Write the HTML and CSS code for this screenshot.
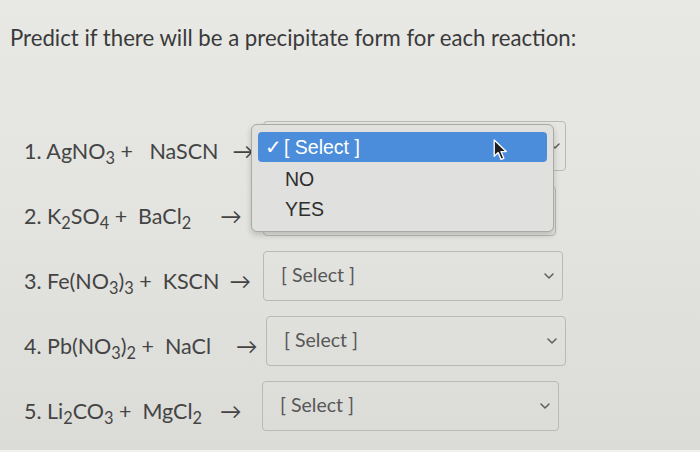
FILE: index.html
```html
<!DOCTYPE html>
<html>
<head>
<meta charset="utf-8">
<link rel="stylesheet" href="styles.css">
</head>
<body>
<div class="page">
  <h1 class="title">Predict if there will be a precipitate form for each reaction:</h1>
  <div class="rows">
    <div class="row">
      <div class="eq">1. AgNO<sub>3</sub> + &nbsp;&nbsp;NaSCN<span class="arr a1">→</span></div>
      <div class="sel covered s1"><span class="ph">[ Select ]</span><svg class="chev" viewBox="0 0 10 6"><polyline points="1,1 5,5 9,1"/></svg></div>
    </div>
    <div class="row">
      <div class="eq">2. K<sub>2</sub>SO<sub>4</sub> + &nbsp;BaCl<sub>2</sub><span class="arr a2">→</span></div>
      <div class="sel covered s2"><span class="ph">[ Select ]</span><svg class="chev" viewBox="0 0 10 6"><polyline points="1,1 5,5 9,1"/></svg></div>
    </div>
    <div class="row">
      <div class="eq">3. Fe(NO<sub>3</sub>)<sub>3</sub> + &nbsp;KSCN<span class="arr a3">→</span></div>
      <div class="sel"><span class="ph">[ Select ]</span><svg class="chev" viewBox="0 0 10 6"><polyline points="1,1 5,5 9,1"/></svg></div>
    </div>
    <div class="row">
      <div class="eq">4. Pb(NO<sub>3</sub>)<sub>2</sub> + &nbsp;NaCl<span class="arr a4">→</span></div>
      <div class="sel s4"><span class="ph">[ Select ]</span><svg class="chev" viewBox="0 0 10 6"><polyline points="1,1 5,5 9,1"/></svg></div>
    </div>
    <div class="row">
      <div class="eq">5. Li<sub>2</sub>CO<sub>3</sub> + &nbsp;MgCl<sub>2</sub><span class="arr a5">→</span></div>
      <div class="sel s5"><span class="ph">[ Select ]</span><svg class="chev" viewBox="0 0 10 6"><polyline points="1,1 5,5 9,1"/></svg></div>
    </div>
  </div>
  <div class="menu">
    <div class="opt active"><span class="check">✓</span>[ Select ]</div>
    <div class="opt">NO</div>
    <div class="opt">YES</div>
  </div>
  <svg class="cursor" viewBox="0 0 14 21"><path d="M1 1 L1 16.5 L4.8 13 L7.6 19.5 L10.2 18.4 L7.5 12 L12.5 12 Z"/></svg>
</div>
</body>
</html>
```
FILE: styles.css
```css
html, body {
  margin: 0;
  padding: 0;
}
body {
  width: 700px;
  height: 452px;
  overflow: hidden;
  font-family: Lato, "Open Sans", sans-serif;
}
.page {
  position: relative;
  height: 450px;
  border-bottom: 2px solid #f1f1ef;
  background: linear-gradient(180deg, #e8e8e5 0%, #e3e3e0 50%, #dbdbd8 100%);
  color: #414141;
}
.title {
  margin: 0;
  padding: 25px 0 0 10px;
  font-size: 22.2px;
  font-weight: 400;
  line-height: 26px;
  color: #3a3a3a;
}
.rows {
  display: flex;
  flex-direction: column;
  gap: 15px;
  margin-top: 70px;
}
.row {
  display: flex;
  align-items: center;
  height: 50px;
}
.eq {
  flex: 0 0 263px;
  box-sizing: border-box;
  padding: 10px 0 0 24px;
  font-size: 21.5px;
  line-height: 26px;
  color: #444;
  white-space: nowrap;
  overflow: visible;
}
sub {
  font-size: 0.76em;
  line-height: 0;
  vertical-align: -0.3em;
}
.arr { display: inline-block; }
.a1 { margin-left: 14px; }
.a2 { margin-left: 29px; }
.a3 { margin-left: 10px; }
.a4 { margin-left: 25px; }
.a5 { margin-left: 18px; }
.sel {
  flex: 0 0 300px;
  box-sizing: border-box;
  height: 50px;
  border: 1.5px solid #b9b9b6;
  border-radius: 4px;
  display: flex;
  align-items: center;
  justify-content: space-between;
  padding: 0 8px 0 17px;
}
.s1 { flex-basis: 303px; padding-right: 5px; }
.s2 { flex-basis: 293px; }
.s4 { margin-left: 3px; }
.s5 { flex-basis: 297px; margin-left: -1px; }
.covered .ph { visibility: hidden; }
.ph {
  font-size: 19.5px;
  color: #575757;
  padding-bottom: 3px;
}
.chev {
  width: 10px;
  height: 6px;
  fill: none;
  stroke: #5e5e5e;
  stroke-width: 1.5;
  stroke-linecap: round;
  stroke-linejoin: round;
}
.menu {
  position: absolute;
  left: 251px;
  top: 124px;
  width: 303px;
  height: 108px;
  box-sizing: border-box;
  padding: 7px 6px;
  background: #e0e0de;
  border: 1px solid #a9a9a6;
  border-radius: 6px;
  box-shadow: 0 3px 6px rgba(0, 0, 0, 0.18);
  font-family: "Liberation Sans", Arial, sans-serif;
  font-size: 19.5px;
  color: #2e2e2e;
}
.opt {
  height: 30px;
  line-height: 31px;
  padding-left: 27px;
  position: relative;
}
.opt.active {
  background: #4b8ddb;
  color: #fff;
  border-radius: 4px;
  padding-left: 26px;
  margin-bottom: 2px;
}
.check {
  position: absolute;
  left: 7px;
  top: 0;
}
.cursor {
  position: absolute;
  left: 493px;
  top: 139px;
  width: 15px;
  height: 22px;
  fill: #1e1e1e;
  stroke: #fff;
  stroke-width: 1.3;
  stroke-linejoin: round;
}
```
